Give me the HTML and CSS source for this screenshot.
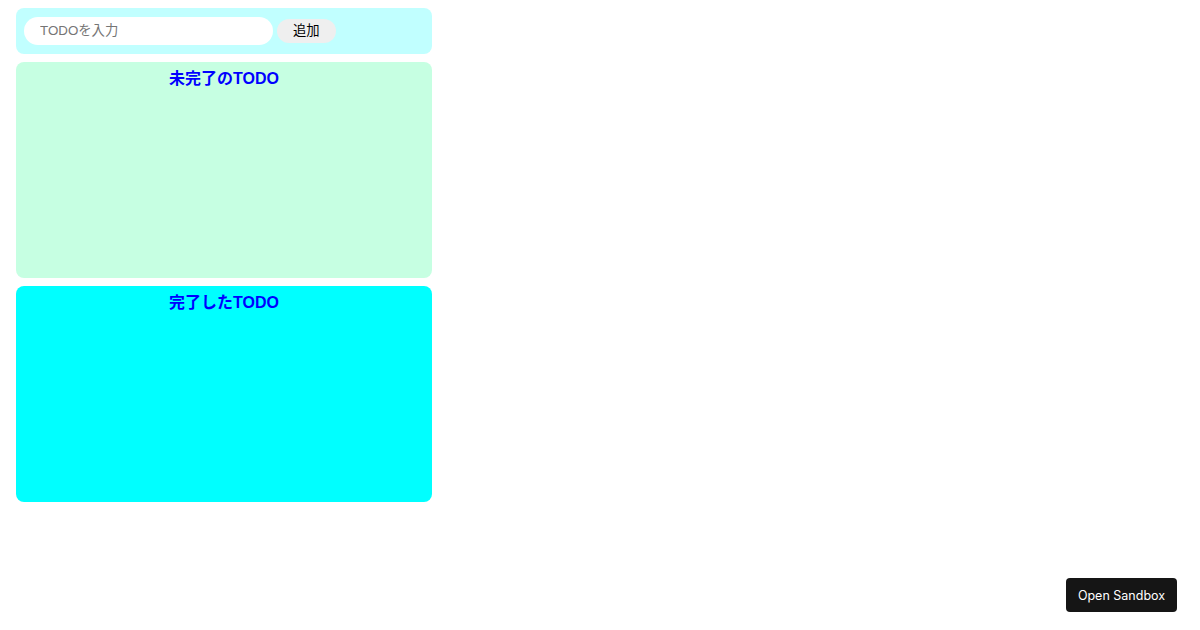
FILE: index.html
```html
<!DOCTYPE html>
<html lang="ja">
<head>
<meta charset="utf-8">
<title>TODO</title>
<link rel="stylesheet" href="styles.css">
</head>
<body>
<div class="input-area">
  <input class="todo-input" placeholder="TODOを入力"> <button class="add-button">追加</button>
</div>
<div class="incomplete-area">
  <p class="title">未完了のTODO</p>
  <ul class="list"></ul>
</div>
<div class="complete-area">
  <p class="title">完了したTODO</p>
  <ul class="list"></ul>
</div>
<a class="open-sandbox">Open Sandbox</a>
</body>
</html>
```
FILE: styles.css
```css
html, body {
  margin: 0;
}
body {
  padding: 8px;
  font-family: "Liberation Sans", Arial, "Noto Sans CJK JP", sans-serif;
  background: #ffffff;
}
.todo-input {
  font: 13.33px "Liberation Sans", Arial, "Noto Sans CJK JP", sans-serif;
  line-height: 16px;
  height: 16px;
  border-radius: 16px;
  border: none;
  padding: 6px 16px;
  outline: none;
  width: 217px;
  color: #000;
}
.todo-input::placeholder {
  color: #757575;
}
.add-button {
  font: 13.33px "Liberation Sans", Arial, "Noto Sans CJK JP", sans-serif;
  line-height: 16px;
  height: 24px;
  border-radius: 16px;
  border: none;
  padding: 4px 16px;
  background-color: #efefef;
  color: #000;
}
.input-area {
  background-color: #c1ffff;
  width: 400px;
  height: 30px;
  border-radius: 8px;
  padding: 8px;
  margin: 0 8px 8px;
  display: flex;
  align-items: center;
  gap: 4px;
}
.incomplete-area {
  background-color: #c6ffe2;
  width: 400px;
  min-height: 200px;
  padding: 8px;
  margin: 0 8px 8px;
  border-radius: 8px;
}
.complete-area {
  background-color: #00ffff;
  width: 400px;
  min-height: 200px;
  padding: 8px;
  margin: 0 8px 8px;
  border-radius: 8px;
}
.title {
  text-align: center;
  margin: 0;
  font-weight: bold;
  font-size: 16px;
  line-height: 18px;
  color: #0000ff;
}
.list {
  margin: 0;
  padding: 0;
  list-style: none;
}
.open-sandbox {
  position: fixed;
  right: 23px;
  bottom: 18px;
  width: 111px;
  height: 34px;
  box-sizing: border-box;
  display: flex;
  align-items: center;
  justify-content: center;
  background: #151515;
  color: #ffffff;
  border-radius: 4px;
  font: 12.5px Inter, "Liberation Sans", sans-serif;
}
```
